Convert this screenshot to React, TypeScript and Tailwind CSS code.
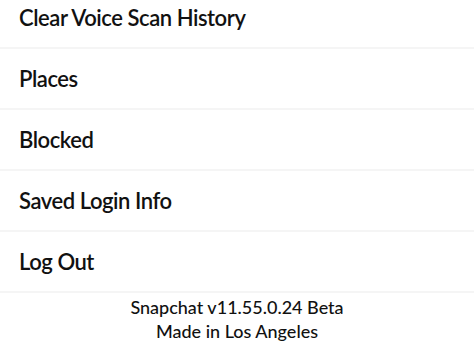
const items = [
  "Clear Voice Scan History",
  "Places",
  "Blocked",
  "Saved Login Info",
  "Log Out",
];

export default function App() {
  return (
    <div
      className="h-[357px] w-[474px] overflow-hidden bg-white text-[#111111]"
      style={{ fontFamily: "Lato, 'Noto Sans', sans-serif" }}
    >
      <div className="-mt-[12px]">
        {items.map((label) => (
          <div
            key={label}
            className="flex h-[61px] items-center border-b-2 border-[#f5f5f5] px-[19px] text-[22px] font-semibold tracking-[-0.45px]"
          >
            {label}
          </div>
        ))}
      </div>
      <div className="pt-[2px] text-center text-[18px] font-medium leading-[24px]">
        <p>Snapchat v11.55.0.24 Beta</p>
        <p>Made in Los Angeles</p>
      </div>
    </div>
  );
}
